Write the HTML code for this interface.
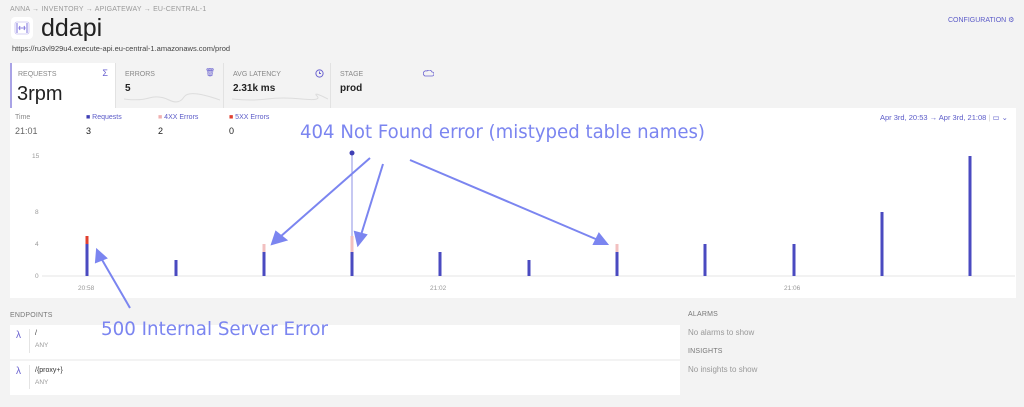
<!DOCTYPE html>
<html><head><meta charset="utf-8"><style>
*{margin:0;padding:0;box-sizing:border-box}
body{width:1024px;height:407px;background:#f3f3f3;font-family:"Liberation Sans",sans-serif;position:relative;overflow:hidden;color:#222}
.a{position:absolute}
.sm{font-size:7px;color:#777;letter-spacing:.2px}
.card{position:absolute;top:63px;height:45px;border-right:1px solid #e2e2e2}
.lbl{font-size:7px;color:#888;position:absolute;left:9px;top:8px}
.val{font-size:10px;font-weight:bold;position:absolute;left:9px;top:20px;color:#222}
.row{position:absolute;left:10px;width:670px;background:#fff}
</style></head><body>
<div class="a sm" style="left:10px;top:6px;color:#999">ANNA → INVENTORY → APIGATEWAY → EU-CENTRAL-1</div>
<div class="a" style="left:11px;top:17px;width:22px;height:22px;background:#fff;border-radius:4px"></div>
<svg class="a" style="left:14px;top:21px" width="16" height="14" viewBox="0 0 16 14"><path d="M3 2v10M13 2v10M5 7h6M6 5l-1 2 1 2M10 5l1 2-1 2" stroke="#8a80e0" stroke-width="1.1" fill="none"/><rect x="1" y="1" width="14" height="12" rx="2" stroke="#c8c2f0" fill="none" stroke-width=".8"/></svg>
<div class="a" style="left:41px;top:14px;font-size:25px;color:#222">ddapi</div>
<div class="a" style="left:12px;top:44px;font-size:7.5px;color:#444">https://ru3vl929u4.execute-api.eu-central-1.amazonaws.com/prod</div>
<div class="a" style="left:948px;top:16px;font-size:7px;color:#5b5bc8">CONFIGURATION ⚙</div>

<div class="card" style="left:10px;width:106px;background:#fff;border-left:2px solid #a9a3e6"><div class="lbl" style="left:6px">REQUESTS</div><div class="a" style="right:7px;top:5px;font-size:9px;color:#6a62d0">Σ</div><div class="a" style="left:5px;top:20px;font-size:20px">3rpm</div></div>
<div class="card" style="left:116px;width:108px"><div class="lbl">ERRORS</div><div class="val">5</div><div class="a" style="right:8px;top:5px;font-size:8px;color:#6a62d0">🗑</div><svg class="a" style="left:8px;top:30px" width="96" height="12"><path d="M0 6Q15 8 25 5T45 7 60 4 96 7" stroke="#ddd" fill="none"/></svg></div>
<div class="card" style="left:224px;width:107px"><div class="lbl">AVG LATENCY</div><div class="val">2.31k ms</div><svg class="a" style="right:6px;top:6px" width="9" height="9"><circle cx="4.5" cy="4.5" r="3.6" stroke="#6a62d0" fill="none"/><path d="M4.5 2.5v2h1.5" stroke="#6a62d0" fill="none"/></svg><svg class="a" style="left:8px;top:30px" width="96" height="12"><path d="M0 6Q20 8 35 6T70 6 85 3 96 6" stroke="#ddd" fill="none"/></svg></div>
<div class="card" style="left:331px;width:109px;border-right:none"><div class="lbl">STAGE</div><div class="val">prod</div><svg class="a" style="right:6px;top:7px" width="11" height="7"><path d="M2 6h7a2 2 0 0 0 0-4 3 3 0 0 0-5-1 2 2 0 0 0-2 5z" stroke="#6a62d0" fill="none" stroke-width=".8"/></svg></div>

<div class="a" style="left:10px;top:108px;width:1006px;height:190px;background:#fff"></div>
<div class="a" style="left:15px;top:114px;font-size:7px;color:#888">Time</div>
<div class="a" style="left:15px;top:126px;font-size:9px;color:#666">21:01</div>
<div class="a" style="left:86px;top:114px;font-size:7px;color:#5b5bc8"><span style="color:#3f3fb5">■</span> Requests</div>
<div class="a" style="left:86px;top:126px;font-size:9px">3</div>
<div class="a" style="left:158px;top:114px;font-size:7px;color:#5b5bc8"><span style="color:#f0b0b0">■</span> 4XX Errors</div>
<div class="a" style="left:158px;top:126px;font-size:9px">2</div>
<div class="a" style="left:229px;top:114px;font-size:7px;color:#5b5bc8"><span style="color:#e04030">■</span> 5XX Errors</div>
<div class="a" style="left:229px;top:126px;font-size:9px">0</div>
<div class="a" style="left:880px;top:113px;font-size:7.5px;color:#5b5bc8">Apr 3rd, 20:53 → Apr 3rd, 21:08 <span style="color:#ccc">|</span> ▭ ⌄</div>

<div class="a sm" style="left:10px;top:312px;color:#777">ENDPOINTS</div>
<div class="row" style="top:325px;height:34px"></div>
<div class="row" style="top:361px;height:34px"></div>
<div class="a" style="left:16px;top:330px;font-size:10px;color:#6a62d0">λ</div>
<div class="a" style="left:29px;top:329px;width:1px;height:24px;background:#e4e4e4"></div>
<div class="a" style="left:35px;top:330px;font-size:7px;color:#333">/</div>
<div class="a" style="left:35px;top:342px;font-size:6.5px;color:#999">ANY</div>
<div class="a" style="left:16px;top:366px;font-size:10px;color:#6a62d0">λ</div>
<div class="a" style="left:29px;top:365px;width:1px;height:24px;background:#e4e4e4"></div>
<div class="a" style="left:35px;top:367px;font-size:7px;color:#333">/{proxy+}</div>
<div class="a" style="left:35px;top:379px;font-size:6.5px;color:#999">ANY</div>

<div class="a sm" style="left:688px;top:311px">ALARMS</div>
<div class="a" style="left:688px;top:328px;font-size:8px;color:#999">No alarms to show</div>
<div class="a sm" style="left:688px;top:348px">INSIGHTS</div>
<div class="a" style="left:688px;top:365px;font-size:8px;color:#999">No insights to show</div>

<svg class="a" style="left:0;top:0" width="1024" height="407">
<g font-size="6.5" fill="#999" font-family="Liberation Sans"><text x="32" y="158">15</text><text x="35" y="214">8</text><text x="35" y="246">4</text><text x="35" y="278">0</text>
<text x="78" y="290">20:58</text><text x="430" y="290">21:02</text><text x="784" y="290">21:06</text></g>
<line x1="42" y1="276" x2="1015" y2="276" stroke="#e4e4e4"/>
<line x1="352" y1="153" x2="352" y2="276" stroke="#8d92e6"/>
<circle cx="352" cy="153" r="2.5" fill="#3f3fb5"/>
<g stroke-width="3">
<line x1="87" y1="276" x2="87" y2="244" stroke="#4a4ac0"/><line x1="87" y1="244" x2="87" y2="236" stroke="#e04030"/>
<line x1="176" y1="276" x2="176" y2="260" stroke="#4a4ac0"/>
<line x1="264" y1="276" x2="264" y2="252" stroke="#4a4ac0"/><line x1="264" y1="252" x2="264" y2="244" stroke="#f2c0c0"/>
<line x1="352" y1="276" x2="352" y2="252" stroke="#4a4ac0"/><line x1="352" y1="252" x2="352" y2="236" stroke="#f2c0c0"/>
<line x1="440" y1="276" x2="440" y2="252" stroke="#4a4ac0"/>
<line x1="529" y1="276" x2="529" y2="260" stroke="#4a4ac0"/>
<line x1="617" y1="276" x2="617" y2="252" stroke="#4a4ac0"/><line x1="617" y1="252" x2="617" y2="244" stroke="#f2c0c0"/>
<line x1="705" y1="276" x2="705" y2="244" stroke="#4a4ac0"/>
<line x1="794" y1="276" x2="794" y2="244" stroke="#4a4ac0"/>
<line x1="882" y1="276" x2="882" y2="212" stroke="#4a4ac0"/>
<line x1="970" y1="276" x2="970" y2="156" stroke="#4a4ac0"/>
</g>
<g stroke="#7b85f0" stroke-width="2" fill="#7b85f0">
<line x1="370" y1="158" x2="280" y2="237"/><polygon points="272,244 276,232 286,240"/>
<line x1="383" y1="164" x2="361" y2="235"/><polygon points="358,245 355,232 366,235"/>
<line x1="410" y1="160" x2="598" y2="240"/><polygon points="607,244 594,244 599,234"/>
<line x1="130" y1="308" x2="101" y2="258"/><polygon points="97,250 106,258 96,262"/>
</g>
<g fill="#7b85f0" font-family="DejaVu Sans" font-size="19">
<text x="300" y="138" textLength="405" lengthAdjust="spacingAndGlyphs">404 Not Found error (mistyped table names)</text>
<text x="101" y="335" textLength="227" lengthAdjust="spacingAndGlyphs">500 Internal Server Error</text>
</g>
</svg>
</body></html>
